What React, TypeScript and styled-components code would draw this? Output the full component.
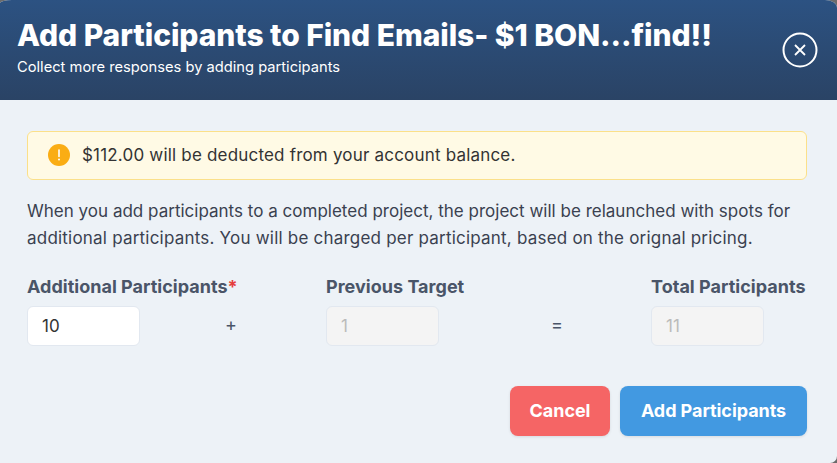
import React from "react";
import styled, { createGlobalStyle } from "styled-components";

const Global = createGlobalStyle`
  html, body { margin: 0; padding: 0; background: #6b6b6b; }
  * { box-sizing: border-box; }
  body { font-family: "Inter", "Roboto", "Liberation Sans", sans-serif; }
`;

const Dialog = styled.div`
  width: 837px;
  height: 463px;
  border-top-left-radius: 12px 3px;
  border-top-right-radius: 12px 8px;
  border-bottom-right-radius: 7px;
  overflow: hidden;
  background: #edf2f7;
  display: flex;
  flex-direction: column;
`;

const Header = styled.header`
  height: 100px;
  flex: none;
  background: linear-gradient(180deg, #2c5282 0%, #2a4365 100%);
  color: #fff;
  display: flex;
  align-items: center;
  justify-content: space-between;
  padding: 0 19px 0 17px;
`;

const Titles = styled.div`
  display: flex;
  flex-direction: column;
  gap: 5px;
  margin-top: -7px;
`;

const Title = styled.h1`
  margin: 0;
  font-size: 30px;
  line-height: 36px;
  font-weight: 800;
  letter-spacing: -0.07px;
  white-space: nowrap;
`;

const Subtitle = styled.p`
  margin: 0;
  font-size: 14.7px;
  line-height: 18px;
`;

const CloseButton = styled.button`
  width: 36px;
  height: 36px;
  padding: 0;
  border: none;
  background: none;
  color: #fff;
  display: block;
`;

const Body = styled.main`
  flex: 1;
  padding: 31px 30px 0 27px;
  display: flex;
  flex-direction: column;
`;

const Notice = styled.div`
  height: 49px;
  flex: none;
  border: 1px solid #fbe08a;
  border-radius: 6px;
  background: #fffae5;
  display: flex;
  align-items: center;
  gap: 12px;
  padding: 0 20px 2px;
  font-size: 17px;
  letter-spacing: 0.19px;
  color: #333;
`;

const Description = styled.p`
  margin: 18px 0 0;
  font-size: 17px;
  line-height: 27px;
  color: #3a4150;
`;

const DescriptionLine = styled.span<{ $tracking: number }>`
  display: block;
  white-space: nowrap;
  letter-spacing: ${(p) => p.$tracking}px;
`;

const FormRow = styled.div`
  margin-top: 24px;
  display: grid;
  grid-template-columns: 194px 20px 306px 20px 240px;
  align-items: end;
`;

const Field = styled.div<{ $offset?: number }>`
  display: flex;
  flex-direction: column;
  gap: 8px;
  margin-left: ${(p) => p.$offset ?? 0}px;
  justify-self: start;
`;

const Label = styled.label`
  font-size: 18px;
  line-height: 22px;
  font-weight: 700;
  letter-spacing: 0.02px;
  color: #4a5568;
  white-space: nowrap;
`;

const Required = styled.span`
  color: #e53e3e;
`;

const NumberBox = styled.input`
  width: 112.5px;
  height: 40px;
  border: 1px solid #e2e8f0;
  border-radius: 6px;
  padding: 0 14px;
  font: inherit;
  font-size: 17px;
  color: #333;
  background: #fff;
  &:disabled {
    background: #f4f4f4;
    color: #bbb;
  }
`;

const Operator = styled.span`
  height: 40px;
  line-height: 38px;
  font-size: 18px;
  text-align: center;
  color: #4a5568;
`;

const Actions = styled.div`
  margin-top: 40px;
  display: flex;
  justify-content: flex-end;
  gap: 10px;
`;

const ActionButton = styled.button<{ $tone: string; $width: number }>`
  width: ${(p) => p.$width}px;
  height: 50px;
  padding: 0 0 2px;
  border: none;
  border-radius: 8px;
  background: ${(p) => p.$tone};
  color: #fff;
  font: inherit;
  font-size: 18px;
  font-weight: 700;
  letter-spacing: -0.06px;
  box-shadow: 0 1px 3px rgba(0, 0, 0, 0.1);
`;

export default function App() {
  return (
    <>
      <Global />
      <Dialog>
        <Header>
          <Titles>
            <Title>Add Participants to Find Emails- $1 BON...find!!</Title>
            <Subtitle>Collect more responses by adding participants</Subtitle>
          </Titles>
          <CloseButton aria-label="Close">
            <svg width="36" height="36" viewBox="0 0 36 36" fill="none" stroke="currentColor">
              <circle cx="18" cy="18" r="16.5" strokeWidth="2" />
              <path d="M13 13L23 23M23 13L13 23" strokeWidth="1.8" />
            </svg>
          </CloseButton>
        </Header>
        <Body>
          <Notice>
            <svg width="22" height="22" viewBox="0 0 22 22">
              <circle cx="11" cy="11" r="11" fill="#faad14" />
              <path d="M11 6v6.5" stroke="#fff" strokeWidth="1.6" strokeLinecap="round" />
              <circle cx="11" cy="15.5" r="1" fill="#fff" />
            </svg>
            $112.00 will be deducted from your account balance.
          </Notice>
          <Description>
            <DescriptionLine $tracking={0.01}>
              When you add participants to a completed project, the project will be relaunched with spots for
            </DescriptionLine>
            <DescriptionLine $tracking={0.21}>
              additional participants. You will be charged per participant, based on the orignal pricing.
            </DescriptionLine>
          </Description>
          <FormRow>
            <Field>
              <Label>Additional Participants<Required>*</Required></Label>
              <NumberBox defaultValue="10" />
            </Field>
            <Operator>+</Operator>
            <Field $offset={85}>
              <Label>Previous Target</Label>
              <NumberBox value="1" disabled readOnly />
            </Field>
            <Operator>=</Operator>
            <Field $offset={84}>
              <Label>Total Participants</Label>
              <NumberBox value="11" disabled readOnly />
            </Field>
          </FormRow>
          <Actions>
            <ActionButton $tone="#f56565" $width={100}>Cancel</ActionButton>
            <ActionButton $tone="#4299e1" $width={187}>Add Participants</ActionButton>
          </Actions>
        </Body>
      </Dialog>
    </>
  );
}
